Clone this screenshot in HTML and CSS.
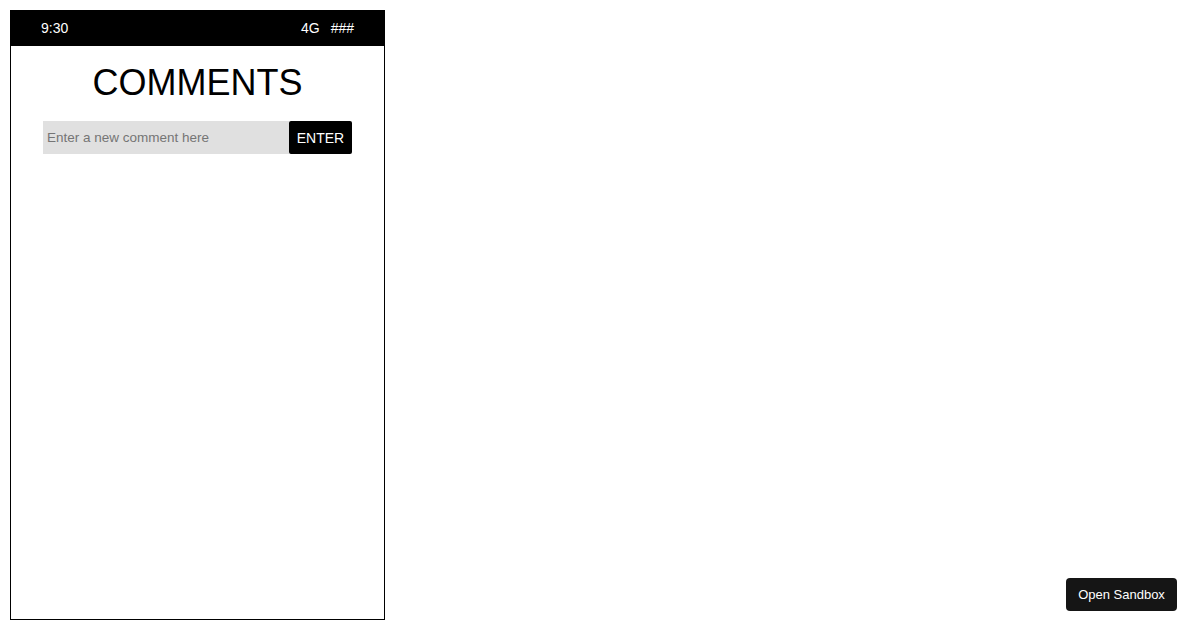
FILE: index.html
```html
<!DOCTYPE html>
<html>
<head>
<meta charset="utf-8">
<link rel="stylesheet" href="styles.css">
</head>
<body>
<div class="phone">
  <div class="status">
    <span class="time">9:30</span>
    <span class="signal"><span>4G</span><span>###</span></span>
  </div>
  <div class="content">
    <h1 class="title">COMMENTS</h1>
    <form class="comment-form">
      <input class="comment-input" type="text" placeholder="Enter a new comment here">
      <button class="enter-btn" type="button">ENTER</button>
    </form>
  </div>
</div>
<button class="sandbox-btn" type="button">Open Sandbox</button>
</body>
</html>
```
FILE: styles.css
```css
html, body {
  margin: 0;
  padding: 0;
  background: #fff;
  font-family: "Liberation Sans", Arial, sans-serif;
}
body {
  padding: 10px;
  box-sizing: border-box;
  height: 630px;
}
.phone {
  width: 375px;
  height: 610px;
  box-sizing: border-box;
  border: 1px solid #000;
  display: flex;
  flex-direction: column;
}
.status {
  height: 36px;
  margin: -1px -1px 0 -1px;
  background: #000;
  color: #fff;
  display: flex;
  align-items: center;
  justify-content: space-between;
  padding: 0 31px 0 31px;
  font-size: 14px;
  flex-shrink: 0;
}
.signal {
  display: flex;
  gap: 11px;
}
.content {
  display: flex;
  flex-direction: column;
  align-items: center;
  padding-top: 16px;
}
.title {
  margin: 0;
  font-size: 36px;
  font-weight: normal;
  line-height: 41px;
  color: #000;
}
.comment-form {
  margin-top: 18px;
  display: flex;
  height: 33px;
}
.comment-input {
  width: 246px;
  height: 33px;
  box-sizing: border-box;
  border: none;
  background: #e0e0e0;
  padding: 0 4px;
  font-family: "Liberation Sans", Arial, sans-serif;
  font-size: 13.5px;
  color: #000;
  outline: none;
}
.comment-input::placeholder {
  color: #757575;
}
.enter-btn {
  width: 63px;
  height: 33px;
  border: none;
  border-radius: 2px;
  background: #000;
  color: #fff;
  font-family: "Liberation Sans", Arial, sans-serif;
  font-size: 14px;
  padding: 0;
}
.sandbox-btn {
  position: fixed;
  right: 23px;
  bottom: 19px;
  width: 111px;
  height: 33px;
  border: none;
  border-radius: 4px;
  background: #151515;
  color: #fff;
  font-family: "Liberation Sans", Arial, sans-serif;
  font-size: 13px;
  padding: 0;
}
```
